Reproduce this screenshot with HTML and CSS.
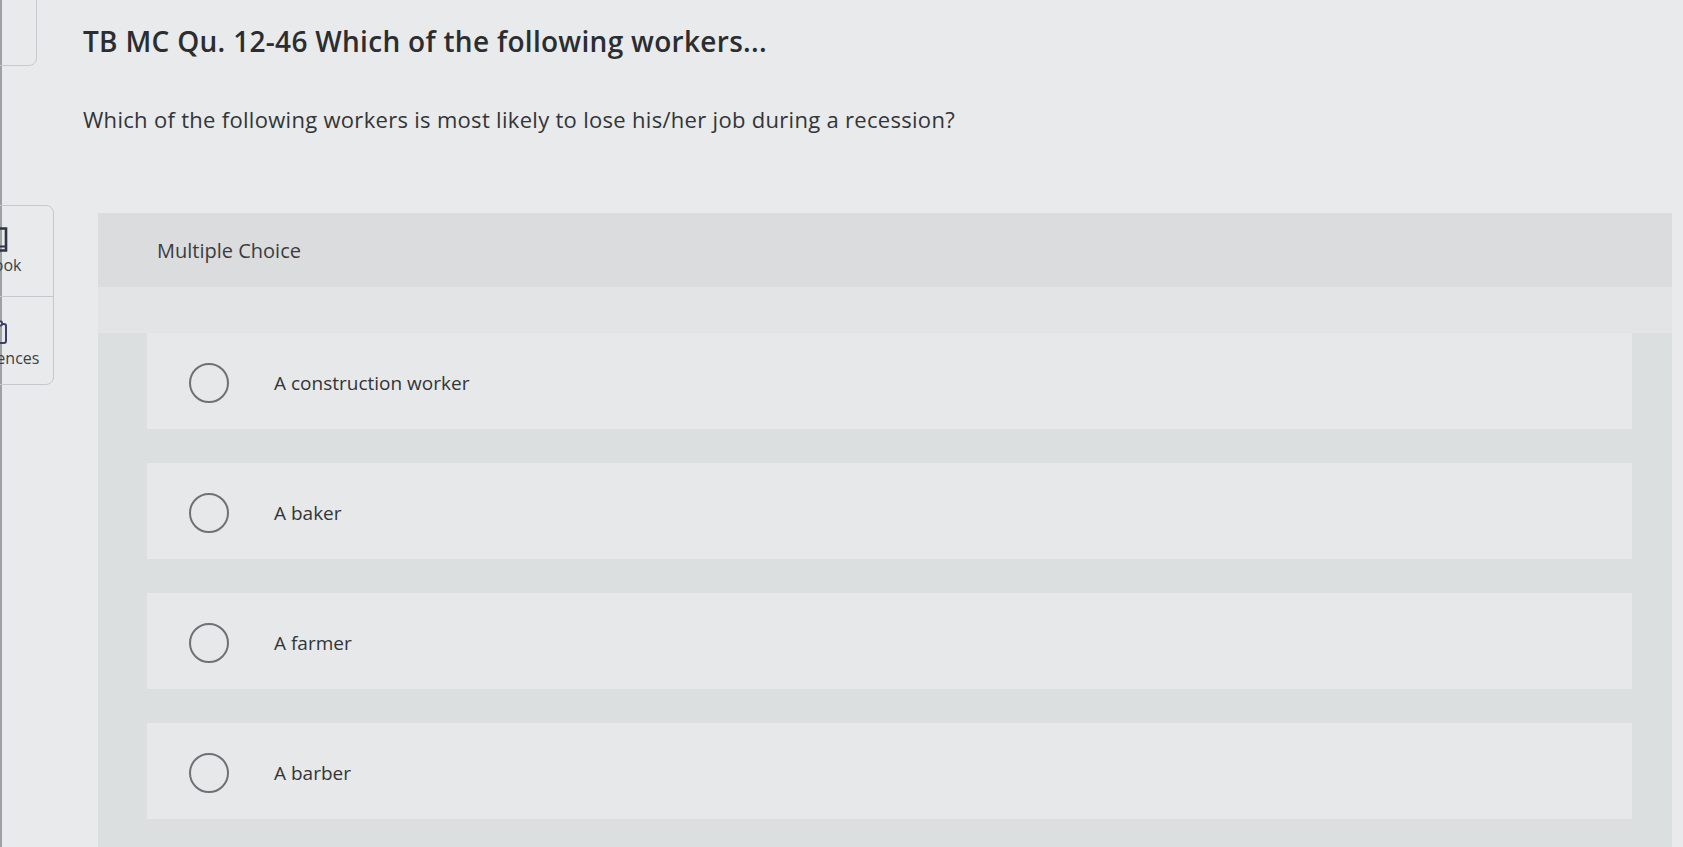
FILE: index.html
```html
<!DOCTYPE html>
<html lang="en">
<head>
    <meta charset="UTF-8">
    <meta name="viewport" content="width=device-width, initial-scale=1.0">
    <title>TB MC Qu. 12-46</title>
    <link rel="stylesheet" href="styles.css">
</head>
<body>

<div class="page">
    <aside class="side">
        <div class="side-card side-top"></div>
        <div class="side-card side-tools">
            <div class="tool">
                <svg class="tool-icon" viewBox="0 0 20 25" width="20" height="25">
                    <path d="M2 3.5a2 2 0 0 1 2-2h14v22H4a2 2 0 0 1-2-2z" fill="none" stroke="#2f3447" stroke-width="2.6"/>
                    <path d="M2 19.5h15" stroke="#2f3447" stroke-width="2"/>
                </svg>
                <span>eBook</span>
            </div>
            <div class="tool">
                <svg class="tool-icon" viewBox="0 0 20 25" width="20" height="25">
                    <rect x="2" y="4" width="16" height="19" rx="2" fill="none" stroke="#3b4066" stroke-width="2"/>
                    <rect x="6" y="1.5" width="8" height="4" rx="1" fill="#e8eaeb" stroke="#3b4066" stroke-width="1.8"/>
                </svg>
                <span>References</span>
            </div>
        </div>
    </aside>

    <main class="main">
        <h1 class="title">TB MC Qu. 12-46 Which of the following workers...</h1>
        <p class="question">Which of the following workers is most likely to lose his/her job during a recession?</p>

        <section class="panel">
            <div class="panel-head">Multiple Choice</div>
            <div class="choices">
                <label class="choice">
                    <span class="radio"></span>
                    <span class="choice-text">A construction worker</span>
                </label>
                <label class="choice">
                    <span class="radio"></span>
                    <span class="choice-text">A baker</span>
                </label>
                <label class="choice">
                    <span class="radio"></span>
                    <span class="choice-text">A farmer</span>
                </label>
                <label class="choice">
                    <span class="radio"></span>
                    <span class="choice-text">A barber</span>
                </label>
            </div>
        </section>
    </main>
</div>

</body>
</html>
```

FILE: styles.css
```css
body {
    margin: 0;
    height: 100vh;
    overflow: hidden;
    background-color: #e8eaeb;
    font-family: "Open Sans", "Liberation Sans", sans-serif;
    color: #36383b;
}
.page {
    display: flex;
    height: 100vh;
    border-left: 2px solid #9fa2a5;
}

/* left tool strip, mostly off the edge of the screen */
.side {
    flex: none;
    width: 58px;
}
.side-card {
    border: 1px solid #c6c9cb;
    border-radius: 8px;
    box-sizing: border-box;
}
.side-top {
    width: 100px;
    height: 86px;
    margin: -20px 0 0 -65px;
}
.side-tools {
    width: 112px;
    height: 180px;
    margin: 139px 0 0 -60px;
}
.tool {
    display: flex;
    flex-direction: column;
    align-items: center;
    gap: 3px;
    height: 90px;
    padding-top: 21px;
    box-sizing: border-box;
    font-size: 16px;
    line-height: 20px;
    color: #3d3f44;
}
.tool + .tool {
    border-top: 1px solid #c6c9cb;
    height: 89px;
    padding-top: 23px;
}
.tool-icon {
    display: block;
}

.main {
    flex: 1;
    display: flex;
    flex-direction: column;
    padding-left: 23px;
    min-width: 0;
}
.title {
    margin: 25px 0 0;
    font-size: 28px;
    line-height: 1.2;
    font-weight: 600;
    letter-spacing: 0.3px;
    color: #2b2d30;
}
.question {
    margin: 47px 0 0;
    font-size: 22px;
    line-height: 1.2;
    letter-spacing: 0.3px;
    color: #333538;
}

.panel {
    flex: 1;
    margin: 81px 11px 0 15px;
    background: linear-gradient(#dadcde 74px, #e2e4e5 74px, #e2e4e5 120px, #dcdfe0 120px);
}
.panel-head {
    height: 74px;
    box-sizing: border-box;
    padding: 26px 0 0 59px;
    font-size: 20px;
    line-height: 24px;
    color: #3a3c3f;
}
.choices {
    display: flex;
    flex-direction: column;
    gap: 34px;
    padding: 46px 40px 0 49px;
}
.choice {
    display: flex;
    align-items: center;
    gap: 45px;
    height: 96px;
    box-sizing: border-box;
    padding: 5px 0 0 42px;
    background-color: #e6e8e9;
    font-size: 19px;
    line-height: 24px;
    color: #333538;
}
.radio {
    flex: none;
    width: 40px;
    height: 40px;
    box-sizing: border-box;
    border: 2px solid #6f7174;
    border-radius: 50%;
}
```
